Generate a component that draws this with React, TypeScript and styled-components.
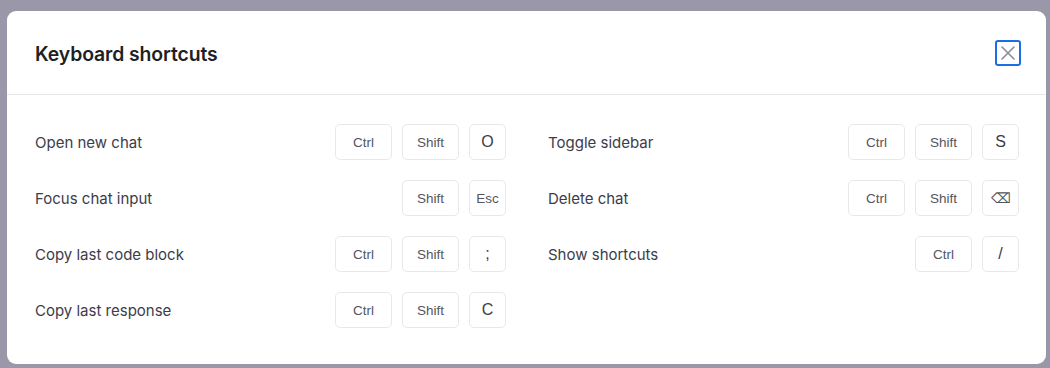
import React from 'react'
import styled, { createGlobalStyle } from 'styled-components'

const GlobalStyle = createGlobalStyle`
  html, body {
    margin: 0;
    padding: 0;
    background: #9a98a8;
    font-family: Inter, "Noto Sans", sans-serif;
  }
`

const Backdrop = styled.div`
  width: 1050px;
  height: 368px;
  padding: 11px 4px 4px 7px;
  box-sizing: border-box;
`

const Dialog = styled.div`
  background: #fff;
  border-radius: 9px;
  height: 100%;
  display: flex;
  flex-direction: column;
`

const Header = styled.div`
  display: flex;
  align-items: center;
  justify-content: space-between;
  height: 84px;
  padding: 1px 25px 0 28px;
  border-bottom: 1px solid #e6e6ea;
  box-sizing: border-box;
`

const Title = styled.h2`
  margin: 0;
  padding-top: 2px;
  font-size: 19.4px;
  font-weight: 600;
  color: #1f1f24;
  letter-spacing: -0.1px;
`

const CloseButton = styled.button`
  width: 26px;
  height: 26px;
  padding: 0;
  border: 2px solid #1b6fe3;
  border-radius: 3px;
  background: #fff;
  display: flex;
  align-items: center;
  justify-content: center;
  color: #8c8b99;
`

const Body = styled.div`
  display: grid;
  grid-template-columns: 471px 471px;
  column-gap: 42px;
  padding: 29px 27px 0 28px;
  align-content: start;
`

const Column = styled.div`
  display: flex;
  flex-direction: column;
  gap: 20px;
`

const Row = styled.div`
  display: flex;
  align-items: center;
  justify-content: space-between;
  height: 36px;
`

const Label = styled.span`
  font-size: 15px;
  color: #3c3c4a;
`

const Keys = styled.div`
  display: flex;
  gap: 10px;
`

const Key = styled.kbd<{ $wide?: boolean; $big?: boolean }>`
  box-sizing: border-box;
  width: ${({ $wide }) => ($wide ? '57px' : '37px')};
  height: 36px;
  border: 1px solid #e8e8ec;
  border-radius: 5px;
  display: flex;
  align-items: center;
  justify-content: center;
  font-family: "Liberation Sans", Arial, sans-serif;
  font-size: ${({ $big }) => ($big ? '16px' : '13.5px')};
  color: ${({ $big }) => ($big ? '#3c3c48' : '#55555f')};
`

type Shortcut = { label: string; keys: string[] }

const left: Shortcut[] = [
  { label: 'Open new chat', keys: ['Ctrl', 'Shift', 'O'] },
  { label: 'Focus chat input', keys: ['Shift', 'Esc'] },
  { label: 'Copy last code block', keys: ['Ctrl', 'Shift', ';'] },
  { label: 'Copy last response', keys: ['Ctrl', 'Shift', 'C'] },
]

const right: Shortcut[] = [
  { label: 'Toggle sidebar', keys: ['Ctrl', 'Shift', 'S'] },
  { label: 'Delete chat', keys: ['Ctrl', 'Shift', '⌫'] },
  { label: 'Show shortcuts', keys: ['Ctrl', '/'] },
]

function ShortcutList({ items }: { items: Shortcut[] }) {
  return (
    <Column>
      {items.map((s) => (
        <Row key={s.label}>
          <Label>{s.label}</Label>
          <Keys>
            {s.keys.map((k) => (
              <Key key={k} $wide={k === 'Ctrl' || k === 'Shift'} $big={k.length === 1 && k !== '⌫'}>
                {k}
              </Key>
            ))}
          </Keys>
        </Row>
      ))}
    </Column>
  )
}

export default function App() {
  return (
    <>
      <GlobalStyle />
      <Backdrop>
        <Dialog>
          <Header>
            <Title>Keyboard shortcuts</Title>
            <CloseButton aria-label="Close">
              <svg width="16" height="16" viewBox="0 0 16 16" fill="none" stroke="currentColor" strokeWidth="1.6" strokeLinecap="round">
                <path d="M2 2L14 14M14 2L2 14" />
              </svg>
            </CloseButton>
          </Header>
          <Body>
            <ShortcutList items={left} />
            <ShortcutList items={right} />
          </Body>
        </Dialog>
      </Backdrop>
    </>
  )
}
